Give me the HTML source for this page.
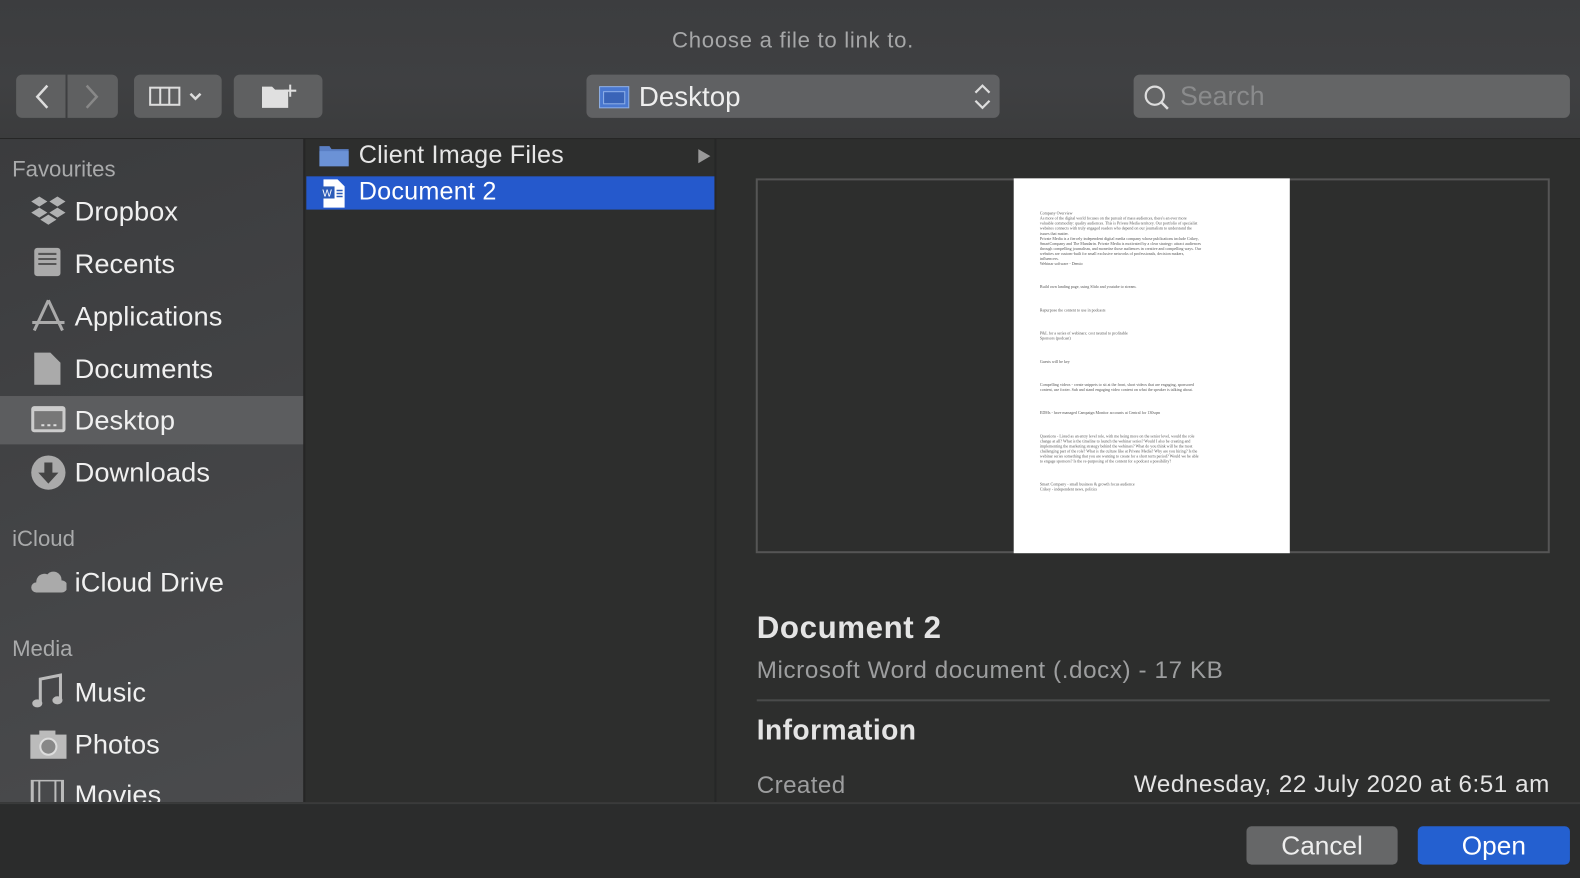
<!DOCTYPE html>
<html><head><meta charset="utf-8"><style>
*{margin:0;padding:0;box-sizing:border-box}
html,body{width:1580px;height:878px;overflow:hidden;background:#2d2e2d}
#w{width:1568px;height:872px;position:relative;transform:scale(1.00766);transform-origin:0 0;font-family:"Liberation Sans",sans-serif;color:#e8e8e8}
.abs{position:absolute}
.top{left:0;top:0;width:1568px;height:138px;background:linear-gradient(#3c3d3f,#3f4042 60%,#3b3c3d);border-bottom:1px solid #262626}
.btn{position:absolute;background:#5f6061;border-radius:6px}
.side{left:0;top:138px;width:301px;height:658px;background:linear-gradient(160deg,#3b3c3e,#444547 60%,#4a4b4d)}
.sh{position:absolute;left:12px;font-size:22px;color:#a9aaab}
.si{position:absolute;left:74px;font-size:27px;color:#f0f0f0;letter-spacing:.1px}
.ic{position:absolute;left:30px}
.bottom{left:0;top:796px;width:1568px;height:82px;background:#2b2c2c;border-top:2px solid #3a3b3b}
.doc p{font-size:4px;line-height:5px;color:#555;font-family:"Liberation Serif",serif}
</style></head><body><div id="w">
<div class="abs top">
 <div class="abs" style="left:0;top:27px;width:1574px;text-align:center;font-size:22px;color:#a6a7a8;letter-spacing:.7px">Choose a file to link to.</div>
 <div class="btn" style="left:16px;top:74px;width:49px;height:43px;border-radius:6px 0 0 6px"></div>
 <div class="btn" style="left:67px;top:74px;width:50px;height:43px;border-radius:0 6px 6px 0"></div>
 <svg class="abs" style="left:30px;top:82px" width="80" height="28"><path d="M17 3 L7 14 L17 25" stroke="#ddd" stroke-width="2.5" fill="none"/><path d="M56 3 L66 14 L56 25" stroke="#888" stroke-width="2.5" fill="none"/></svg>
 <div class="btn" style="left:133px;top:74px;width:87px;height:43px"></div>
 <svg class="abs" style="left:146px;top:84px" width="64" height="24"><rect x="3" y="3" width="29" height="17" stroke="#ddd" stroke-width="2" fill="none"/><path d="M13 3v17M22 3v17" stroke="#ddd" stroke-width="2"/><path d="M43 9 L48 14 L53 9" stroke="#ddd" stroke-width="2.5" fill="none"/></svg>
 <div class="btn" style="left:232px;top:74px;width:88px;height:43px"></div>
 <svg class="abs" style="left:258px;top:80px" width="40" height="30"><path d="M2 6 h10 l3 3 h13 v18 h-26z" fill="#e0e0e0"/><path d="M30 4 v12 M24 10 h12" stroke="#e0e0e0" stroke-width="2"/></svg>
 <div class="btn" style="left:582px;top:74px;width:410px;height:43px;background:#606163"></div>
 <svg class="abs" style="left:594px;top:84px" width="32" height="24"><rect x="1" y="2" width="29" height="21" fill="#4a78d0" stroke="#8fb0e8"/><rect x="5" y="7" width="21" height="12" fill="#3a64b8" stroke="#8fb0e8"/></svg>
 <div class="abs" style="left:634px;top:80px;font-size:27.5px;color:#eee">Desktop</div>
 <svg class="abs" style="left:964px;top:82px" width="22" height="28"><path d="M4 10 L11 3 L18 10 M4 18 L11 25 L18 18" stroke="#ddd" stroke-width="2.2" fill="none"/></svg>
 <div class="btn" style="left:1125px;top:74px;width:433px;height:43px;background:#646566"></div>
 <svg class="abs" style="left:1134px;top:83px" width="30" height="30"><circle cx="12" cy="12" r="9" stroke="#ddd" stroke-width="2.2" fill="none"/><path d="M18.5 18.5 L25 25" stroke="#ddd" stroke-width="2.5"/></svg>
 <div class="abs" style="left:1171px;top:80px;font-size:26.5px;color:#8a8b8c">Search</div>
</div>
<div class="abs side">
 <div class="sh" style="top:17px">Favourites</div>
 <svg class="ic" style="top:56px" width="36" height="30"><g fill="#b0b1b2"><path d="M9 1 l8 5 -8 5 -8-5z M27 1 l8 5 -8 5 -8-5z M9 12 l8 5 -8 5 -8-5z M27 12 l8 5 -8 5 -8-5z M18 19 l8 5 -8 5 -8-5z"/></g></svg>
 <div class="si" style="top:57px">Dropbox</div>
 <svg class="ic" style="top:106px" width="36" height="34"><rect x="4" y="2" width="26" height="28" rx="3" fill="#aaa"/><path d="M8 8h18M8 13h18M8 18h18" stroke="#555" stroke-width="2"/></svg>
 <div class="si" style="top:109px">Recents</div>
 <svg class="ic" style="top:158px" width="36" height="34"><path d="M18 2 L4 32 M18 2 L32 32 M2 24 h32" stroke="#aaa" stroke-width="3" fill="none"/></svg>
 <div class="si" style="top:161px">Applications</div>
 <svg class="ic" style="top:210px" width="36" height="34"><path d="M4 2 h16 l10 10 v22 h-26z" fill="#aaa"/></svg>
 <div class="si" style="top:213px">Documents</div>
 <div class="abs" style="left:0;top:255px;width:301px;height:48px;background:#5c5d5f"></div>
 <svg class="ic" style="top:264px" width="36" height="30"><rect x="1" y="1" width="34" height="26" rx="3" fill="#ccc"/><rect x="4" y="6" width="28" height="18" fill="#777"/><path d="M11 20h3M17 20h3M23 20h3" stroke="#ddd" stroke-width="2"/></svg>
 <div class="si" style="top:264px">Desktop</div>
 <svg class="ic" style="top:313px" width="36" height="36"><circle cx="18" cy="18" r="17" fill="#aaa"/><path d="M14 8 h8 v10 h6 l-10 11 -10-11 h6z" fill="#444"/></svg>
 <div class="si" style="top:316px">Downloads</div>
 <div class="sh" style="top:384px">iCloud</div>
 <svg class="ic" style="top:424px" width="36" height="28"><path d="M6 26 a5 5 0 0 1 0-10 a8 8 0 0 1 11-8 a8 8 0 0 1 14 6 a6 6 0 0 1 0 12z" fill="#aaa"/></svg>
 <div class="si" style="top:425px">iCloud Drive</div>
 <div class="sh" style="top:493px">Media</div>
 <svg class="ic" style="top:530px" width="36" height="36"><path d="M10 30 V6 L30 2 V26" stroke="#bbb" stroke-width="3" fill="none"/><ellipse cx="7" cy="30" rx="5" ry="4" fill="#bbb"/><ellipse cx="27" cy="27" rx="5" ry="4" fill="#bbb"/></svg>
 <div class="si" style="top:534px">Music</div>
 <svg class="ic" style="top:586px" width="36" height="30"><rect x="0" y="5" width="36" height="24" fill="#bbb"/><rect x="9" y="1" width="16" height="6" fill="#bbb"/><circle cx="18" cy="17" r="8" fill="#888" stroke="#ddd" stroke-width="2"/></svg>
 <div class="si" style="top:586px">Photos</div>
 <svg class="ic" style="top:636px" width="36" height="24"><rect x="2" y="0" width="30" height="24" fill="none" stroke="#bbb" stroke-width="3"/><path d="M9 0v24M25 0v24" stroke="#bbb" stroke-width="2"/></svg>
 <div class="si" style="top:636px;height:22px;overflow:hidden">Movies</div>
</div>
<div class="abs" style="left:301px;top:138px;width:2px;height:658px;background:#262626"></div>
<div class="abs" style="left:709px;top:138px;width:2px;height:658px;background:#262727"></div>
<svg class="abs" style="left:316px;top:142px" width="32" height="24"><path d="M1 3 h10 l2 3 h17 v17 h-29z" fill="#5a7fc4"/><rect x="1" y="8" width="29" height="15" fill="#6b92d6"/></svg>
<div class="abs" style="left:356px;top:140px;font-size:25px;color:#e6e6e6;letter-spacing:.2px">Client Image Files</div>
<svg class="abs" style="left:692px;top:147px" width="14" height="16"><path d="M1 1 L13 8 L1 15z" fill="#999"/></svg>
<div class="abs" style="left:304px;top:175px;width:405px;height:33px;background:#2559cc"></div>
<svg class="abs" style="left:318px;top:177px" width="26" height="30"><path d="M3 1h14l7 7v21h-21z" fill="#fff"/><rect x="0" y="8" width="14" height="12" fill="#2b5bb8"/><text x="2" y="18" font-size="10" fill="#fff" font-family="Liberation Sans">W</text><path d="M16 12h6M16 15h6M16 18h6" stroke="#2b5bb8" stroke-width="1.5"/></svg>
<div class="abs" style="left:356px;top:176px;font-size:25px;color:#fff;letter-spacing:.2px">Document 2</div>
<div class="abs" style="left:750px;top:177px;width:788px;height:372px;border:2px solid #555"></div>
<div class="abs doc" style="left:1006px;top:177px;width:274px;height:372px;background:#fff;padding:32px 88px 0 26px">
<p>Company Overview</p><p>As more of the digital world focuses on the pursuit of mass audiences, there's an ever more valuable commodity: quality audiences. This is Private Media territory. Our portfolio of specialist websites connects with truly engaged readers who depend on our journalism to understand the issues that matter.</p><p>Private Media is a fiercely independent digital media company whose publications include Crikey, SmartCompany and The Mandarin. Private Media is motivated by a clear strategy: attract audiences through compelling journalism, and monetise those audiences in creative and compelling ways. Our websites are custom-built for small exclusive networks of professionals, decision makers, influencers.</p><p>Webinar software - Demio</p><br><p>Build own landing page, using Slido and youtube to stream.</p><br><p>Repurpose the content to use in podcasts</p><br><p>P&amp;L for a series of webinars; cost neutral to profitable</p><p>Sponsors (podcast)</p><br><p>Guests will be key</p><br><p>Compelling videos - create snippets to sit at the front, short videos that are engaging, sponsored content, use footer. Sub and stand engaging video content on what the speaker is talking about.</p><br><p>EDMs - have managed Campaign Monitor accounts at Central for 130sqm</p><br><p>Questions - Listed as an entry level role, with me being more on the senior level, would the role change at all? What is the timeline to launch the webinar series? Would I also be creating and implementing the marketing strategy behind the webinars? What do you think will be the most challenging part of the role? What is the culture like at Private Media? Why are you hiring? Is the webinar series something that you are wanting to create for a short term period? Would we be able to engage sponsors? Is the re-purposing of the content for a podcast a possibility?</p><br><p>Smart Company - small business &amp; growth focus audience</p><p>Crikey - independent news, politics</p>
</div>
<div class="abs" style="left:751px;top:605px;font-size:31px;font-weight:bold;color:#e4e4e4;letter-spacing:.6px">Document 2</div>
<div class="abs" style="left:751px;top:652px;font-size:24px;color:#9d9e9f;letter-spacing:.6px">Microsoft Word document (.docx) - 17 KB</div>
<div class="abs" style="left:751px;top:694px;width:787px;height:2px;background:#4a4b4b"></div>
<div class="abs" style="left:751px;top:709px;font-size:28px;font-weight:bold;color:#e4e4e4;letter-spacing:.4px">Information</div>
<div class="abs" style="left:751px;top:766px;font-size:24px;color:#9d9e9f;letter-spacing:.4px">Created</div>
<div class="abs" style="left:1000px;top:765px;width:538px;text-align:right;font-size:24px;color:#e4e4e4;letter-spacing:.55px">Wednesday, 22 July 2020 at 6:51 am</div>
<div class="abs bottom">
 <div class="abs" style="left:1237px;top:22px;width:150px;height:38px;background:#666768;border-radius:5px;text-align:center;font-size:26px;line-height:38px;color:#eee">Cancel</div>
 <div class="abs" style="left:1407px;top:22px;width:151px;height:38px;background:#2460d0;border-radius:5px;text-align:center;font-size:26px;line-height:38px;color:#fff">Open</div>
</div>
</div></body></html>
